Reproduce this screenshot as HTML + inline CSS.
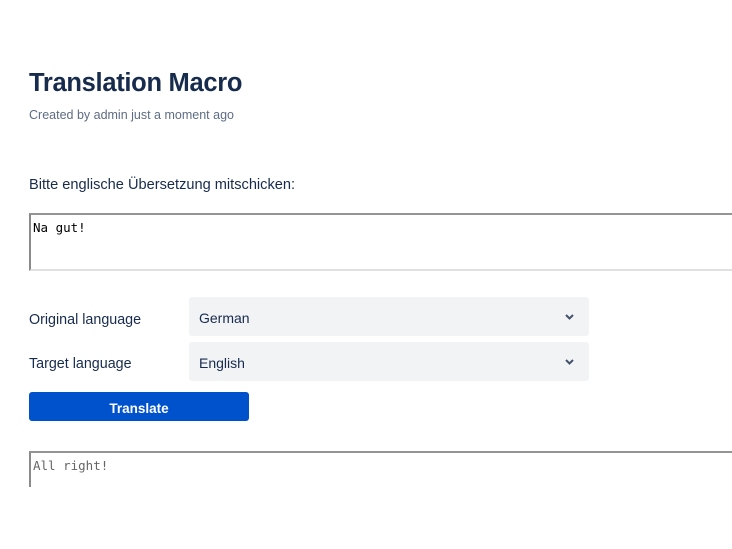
<!DOCTYPE html>
<html><head><meta charset="utf-8"><style>
body{margin:0;width:732px;height:549px;background:#fff;font-family:"Liberation Sans",sans-serif;color:#172b4d;position:relative;overflow:hidden}
.a{position:absolute;white-space:nowrap}
.ta{position:absolute;left:29px;width:720px;border-top:2px solid #949494;border-left:2px solid #8a8a8a;border-bottom:2px solid #e0e0e0;box-sizing:border-box;font-family:"DejaVu Sans Mono","Liberation Mono",monospace;font-size:12.5px;padding:5px 2px}
.sel{position:absolute;left:189px;width:400px;height:39px;background:#f2f3f5;border-radius:3px;font-size:14px;line-height:42px;padding-left:10px;box-sizing:border-box}
.sel svg{position:absolute;right:15px;top:17px}
</style></head><body>
<div class="a" style="left:29px;top:69px;font-size:25.5px;font-weight:bold;letter-spacing:-0.3px">Translation Macro</div>
<div class="a" style="left:29px;top:108px;font-size:12.5px;color:#5e6c84">Created by admin just a moment ago</div>
<div class="a" style="left:29px;top:177px;font-size:14.6px">Bitte englische Übersetzung mitschicken:</div>
<div class="ta" style="top:213px;height:58px;color:#000">Na gut!</div>
<div class="a" style="left:29px;top:312px;font-size:14.3px">Original language</div>
<div class="a" style="left:29px;top:356px;font-size:14.3px">Target language</div>
<div class="sel" style="top:297px">German<svg width="9" height="6" viewBox="0 0 9 6"><path d="M1 1l3.5 3.5L8 1" stroke="#42526e" stroke-width="2" fill="none"/></svg></div>
<div class="sel" style="top:342px">English<svg width="9" height="6" viewBox="0 0 9 6"><path d="M1 1l3.5 3.5L8 1" stroke="#42526e" stroke-width="2" fill="none"/></svg></div>
<div class="a" style="left:29px;top:392px;width:220px;height:29px;background:#0052cc;border-radius:3px;color:#fff;font-weight:bold;font-size:13.5px;text-align:center;line-height:33px">Translate</div>
<div class="ta" style="top:451px;height:36px;border-bottom:none;color:#666">All right!</div>
</body></html>
